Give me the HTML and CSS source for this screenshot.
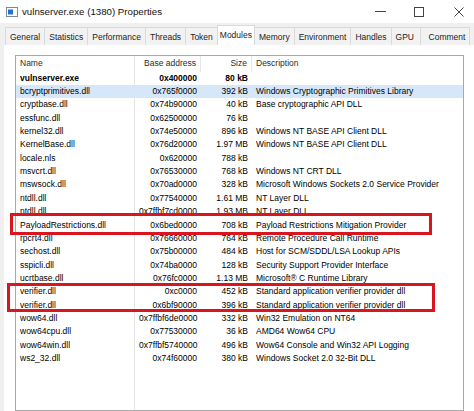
FILE: index.html
```html
<!DOCTYPE html>
<html lang="en">
<head>
    <meta charset="UTF-8">
    <title>vulnserver.exe (1380) Properties</title>
    <link rel="stylesheet" href="styles.css">
</head>
<body>
    <div class="titlebar">
        <svg class="app-icon" width="12" height="10" viewBox="0 0 12 10">
            <rect x="0.5" y="0.5" width="11" height="9" fill="#fff" stroke="#7a8899"/>
            <rect x="2" y="2.5" width="5" height="5" fill="#1f6fd6"/>
        </svg>
        <span class="title">vulnserver.exe (1380) Properties</span>
        <div class="controls">
            <span class="ctl min"></span>
            <span class="ctl max"></span>
            <svg class="ctl close" width="10" height="10" viewBox="0 0 10 10">
                <path d="M0.5 0.5 L9.5 9.5 M9.5 0.5 L0.5 9.5" stroke="#444" stroke-width="1"/>
            </svg>
        </div>
    </div>

    <div class="tabs">
        <div class="tab">General</div>
        <div class="tab">Statistics</div>
        <div class="tab">Performance</div>
        <div class="tab">Threads</div>
        <div class="tab">Token</div>
        <div class="tab active">Modules</div>
        <div class="tab">Memory</div>
        <div class="tab">Environment</div>
        <div class="tab">Handles</div>
        <div class="tab gpu">GPU</div>
        <div class="tab comment">Comment</div>
    </div>

    <div class="page">
        <div class="list">
            <div class="row head">
                <span>Name</span><span class="num sep">Base address</span><span class="num sep">Size</span><span>Description</span>
            </div>
            <div class="row bold"><span>vulnserver.exe</span><span class="num">0x400000</span><span class="num">80 kB</span><span></span></div>
            <div class="row selected"><span>bcryptprimitives.dll</span><span class="num">0x765f0000</span><span class="num">392 kB</span><span>Windows Cryptographic Primitives Library</span></div>
            <div class="row"><span>cryptbase.dll</span><span class="num">0x74b90000</span><span class="num">40 kB</span><span>Base cryptographic API DLL</span></div>
            <div class="row"><span>essfunc.dll</span><span class="num">0x62500000</span><span class="num">76 kB</span><span></span></div>
            <div class="row"><span>kernel32.dll</span><span class="num">0x74e50000</span><span class="num">896 kB</span><span>Windows NT BASE API Client DLL</span></div>
            <div class="row"><span>KernelBase.dll</span><span class="num">0x76d20000</span><span class="num">1.97 MB</span><span>Windows NT BASE API Client DLL</span></div>
            <div class="row"><span>locale.nls</span><span class="num">0x620000</span><span class="num">788 kB</span><span></span></div>
            <div class="row"><span>msvcrt.dll</span><span class="num">0x76530000</span><span class="num">768 kB</span><span>Windows NT CRT DLL</span></div>
            <div class="row"><span>mswsock.dll</span><span class="num">0x70ad0000</span><span class="num">328 kB</span><span>Microsoft Windows Sockets 2.0 Service Provider</span></div>
            <div class="row"><span>ntdll.dll</span><span class="num">0x77540000</span><span class="num">1.61 MB</span><span>NT Layer DLL</span></div>
            <div class="row"><span>ntdll.dll</span><span class="num">0x7ffbf7cd0000</span><span class="num">1.93 MB</span><span>NT Layer DLL</span></div>
            <div class="row"><span>PayloadRestrictions.dll</span><span class="num">0x6bed0000</span><span class="num">708 kB</span><span>Payload Restrictions Mitigation Provider</span></div>
            <div class="row"><span>rpcrt4.dll</span><span class="num">0x76660000</span><span class="num">764 kB</span><span>Remote Procedure Call Runtime</span></div>
            <div class="row"><span>sechost.dll</span><span class="num">0x75b00000</span><span class="num">484 kB</span><span>Host for SCM/SDDL/LSA Lookup APIs</span></div>
            <div class="row"><span>sspicli.dll</span><span class="num">0x74ba0000</span><span class="num">128 kB</span><span>Security Support Provider Interface</span></div>
            <div class="row"><span>ucrtbase.dll</span><span class="num">0x76fc0000</span><span class="num">1.13 MB</span><span>Microsoft® C Runtime Library</span></div>
            <div class="row"><span>verifier.dll</span><span class="num">0xc0000</span><span class="num">452 kB</span><span>Standard application verifier provider dll</span></div>
            <div class="row"><span>verifier.dll</span><span class="num">0x6bf90000</span><span class="num">396 kB</span><span>Standard application verifier provider dll</span></div>
            <div class="row"><span>wow64.dll</span><span class="num">0x7ffbf6de0000</span><span class="num">332 kB</span><span>Win32 Emulation on NT64</span></div>
            <div class="row"><span>wow64cpu.dll</span><span class="num">0x77530000</span><span class="num">36 kB</span><span>AMD64 Wow64 CPU</span></div>
            <div class="row"><span>wow64win.dll</span><span class="num">0x7ffbf5740000</span><span class="num">496 kB</span><span>Wow64 Console and Win32 API Logging</span></div>
            <div class="row"><span>ws2_32.dll</span><span class="num">0x74f60000</span><span class="num">380 kB</span><span>Windows Socket 2.0 32-Bit DLL</span></div>
        </div>

        <!-- annotation boxes drawn over the list -->
        <div class="mark mark-payload"></div>
        <div class="mark mark-verifier"></div>
    </div>
</body>
</html>
```

FILE: styles.css
```css
html {
    overflow: hidden;
}

body {
    margin: 0;
    height: 411px;
    overflow: hidden;
    background-color: #f0f0f0;
    font-family: "Liberation Sans", Arial, sans-serif;
    color: #000;
}

.titlebar {
    height: 23px;
    background: #fff;
    display: flex;
    align-items: center;
    padding-left: 6px;
}

.app-icon {
    margin-right: 4px;
}

.title {
    font-size: 9.7px;
    color: #111;
}

.controls {
    margin-left: auto;
    display: flex;
    align-items: center;
    height: 100%;
}

.ctl.min {
    width: 11px;
    height: 1px;
    background: #444;
    margin-right: 28px;
}

.ctl.max {
    width: 8px;
    height: 8px;
    border: 1px solid #444;
    margin-right: 30px;
}

.ctl.close {
    margin-right: 10px;
}

.tabs {
    display: flex;
    align-items: flex-end;
    height: 22px;
    padding-left: 5px;
    font-size: 8.5px;
    color: #222;
}

.tab {
    height: 18px;
    line-height: 18px;
    padding: 0 4px;
    box-sizing: border-box;
    background: #f2f2f2;
    border: 1px solid #dadada;
    border-bottom: none;
    border-right: none;
}

.tab:last-child {
    border-right: 1px solid #dadada;
}

.tab.active {
    height: 20px;
    line-height: 18px;
    background: #fff;
    padding: 0 2px;
    border-right: 1px solid #dadada;
}

.tab.active + .tab {
    border-left: none;
}

.tab.gpu {
    min-width: 29px;
}

.tab.comment {
    padding: 0 4px 0 8px;
}

.page {
    position: relative;
    background: #fff;
    margin-left: 4px;
    padding: 10px 0 0 11px;
    height: 366px;
    box-sizing: border-box;
    overflow: hidden;
}

.list {
    width: 449px;
    height: 356px;
    box-sizing: border-box;
    border: 1px solid #a9a9a9;
    background: linear-gradient(#e6e6e6, #e6e6e6) 118px 0 / 1px 100% no-repeat;
    font-size: 8.5px;
}

.row {
    display: grid;
    grid-template-columns: 119px 66px 51px 1fr;
    height: 13.36px;
    line-height: 13.36px;
    white-space: nowrap;
}

.row span {
    padding: 0 4px;
    overflow: hidden;
}

.row .num {
    text-align: right;
}

.row.head {
    height: 15.6px;
    line-height: 15.6px;
    color: #2b2b2b;
}

.row.head .sep {
    border-right: 1px solid #e6e6e6;
}

.row.bold {
    font-weight: bold;
}

.row.selected {
    background: #d5e7f8;
}

.mark {
    position: absolute;
    border: 3px solid #d9161f;
    box-sizing: border-box;
}

.mark-payload {
    left: 6px;
    top: 168px;
    width: 422px;
    height: 22px;
}

.mark-verifier {
    left: 3px;
    top: 238px;
    width: 428px;
    height: 29px;
}
```
